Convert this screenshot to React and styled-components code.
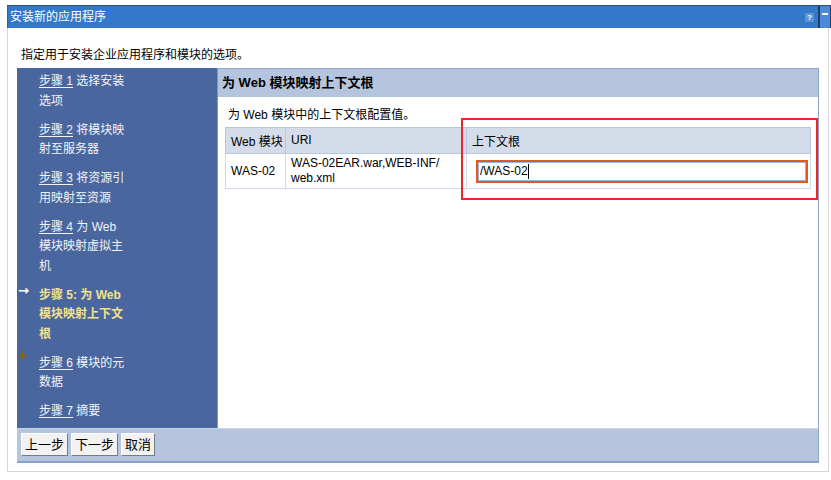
import React from 'react';
import styled, { createGlobalStyle } from 'styled-components';

const GlobalStyle = createGlobalStyle`
  body {
    margin: 0;
    background: #fff;
    font-family: "Liberation Sans", "Noto Sans CJK SC", sans-serif;
    font-size: 12px;
    color: #000;
  }
`;

const Page = styled.div`
  padding: 5px 0 0 7px;
  width: 831px;
  box-sizing: border-box;
`;

const TitleBar = styled.div`
  display: flex;
  align-items: stretch;
  height: 23px;
  background: #3378c9;
  border-top: 1px solid #24508a;
  border-left: 1px solid #2b62a8;
  box-sizing: border-box;
  color: #fff;
`;

const TitleText = styled.div`
  flex: 1;
  padding-left: 2px;
  line-height: 22px;
  font-size: 12px;
`;

const HelpIcon = styled.div`
  align-self: center;
  width: 9px;
  height: 9px;
  margin-right: 4px;
  background: #5d95d8;
  color: #fff;
  font-size: 8px;
  font-weight: bold;
  line-height: 9px;
  text-align: center;
`;

const MinButton = styled.div`
  width: 10px;
  background: #4a8ad6;
  border-left: 2px solid #1d3f6c;
  border-right: 1px solid #1d3f6c;
  display: flex;
  justify-content: center;
  padding-top: 7px;
  box-sizing: content-box;
  &::after {
    content: '';
    width: 6px;
    height: 2px;
    background: #fff;
  }
`;

const Panel = styled.div`
  margin-right: 2px;
  border: 1px solid #d6d6d6;
  border-top: none;
  padding: 19px 9px 8px 9px;
`;

const Intro = styled.div`
  line-height: 16px;
  margin-bottom: 5px;
  padding-left: 4px;
`;

const Wizard = styled.div`
  display: grid;
  grid-template-columns: 201px 1fr;
`;

const Nav = styled.div`
  background: #4a669f;
  border-right: 1px solid #7f96c0;
  padding: 4px 0 6px;
  display: flex;
  flex-direction: column;
  gap: 9.5px;
  height: 360px;
  box-sizing: border-box;
`;

const Step = styled.div`
  display: flex;
  color: ${p => (p.$current ? '#f2e28c' : '#f2f4f8')};
  font-weight: ${p => (p.$current ? 'bold' : 'normal')};
  line-height: 19.5px;
`;

const Marker = styled.div`
  width: 22px;
  flex: none;
  position: relative;
`;

const StepText = styled.div`
  width: 88px;
`;

const StepLink = styled.span`
  text-decoration: underline;
  text-underline-offset: 2px;
`;

const Arrow = styled.span`
  position: absolute;
  left: 1px;
  top: -5px;
  color: #fff;
  font-size: 13px;
  font-family: "DejaVu Sans", sans-serif;
`;

const Star = styled.svg`
  position: absolute;
  left: 0;
  top: -4px;
`;

const Content = styled.div`
  border-top: 1px solid #8ea4c8;
  border-right: 1px solid #8ea4c8;
  position: relative;
`;

const ContentHeader = styled.div`
  background: #b5c5de;
  font-size: 13px;
  font-weight: bold;
  line-height: 28px;
  padding-left: 4px;
`;

const ContentBody = styled.div`
  padding: 9px 7px 0;
`;

const Note = styled.div`
  line-height: 19px;
  padding-left: 3px;
`;

const Table = styled.table`
  width: 100%;
  table-layout: fixed;
  border-collapse: collapse;
  border: 1px solid #b9c7de;
  margin-top: 2px;
`;

const Th = styled.th`
  background: #d4dcea;
  font-weight: normal;
  text-align: left;
  border: 1px solid #b9c7de;
  height: 22px;
  padding: ${p => (p.$low ? '3px 5px 0' : '0 5px 2px')};
  white-space: nowrap;
  vertical-align: middle;
  line-height: 16px;
  font-size: 12px;
`;

const Td = styled.td`
  border: 1px solid #d0d9e8;
  padding: 2px 5px;
  height: 29px;
  line-height: 15px;
  vertical-align: middle;
  font-size: 12px;
`;

const InputCell = styled.td`
  border: 1px solid #d0d9e8;
  padding: 4px 2px 4px 9px;
`;

const FakeInput = styled.div`
  height: 23px;
  box-sizing: border-box;
  border: 2px solid #e2591f;
  box-shadow: inset 0 0 0 1px #9db4dc;
  padding-left: 2px;
  line-height: 19px;
  font-size: 12px;
  display: flex;
  align-items: center;
`;

const Caret = styled.span`
  width: 1px;
  height: 15px;
  background: #000;
`;

const Highlight = styled.div`
  position: absolute;
  left: 243px;
  top: 49px;
  width: 357px;
  height: 82px;
  border: 2px solid #e8272e;
  box-sizing: border-box;
  pointer-events: none;
`;

const ButtonBar = styled.div`
  grid-column: 1 / 3;
  background: #b5c5de;
  border-top: 1px solid #c8d4e6;
  border-bottom: 2px solid #8aa0c8;
  border-right: 1px solid #8ea4c8;
  padding: 4px 4px 5px;
  display: flex;
  gap: 3px;
`;

const Button = styled.button`
  font-family: "Liberation Sans", "Noto Sans CJK SC", sans-serif;
  font-size: 13px;
  height: 23px;
  padding: 0 3px;
  background: #f2f2f2;
  border: 1px solid;
  border-color: #fff #7a7a7a #7a7a7a #fff;
  color: #000;
  line-height: 18px;
`;

const steps = [
  { link: '步骤 1', text: ' 选择安装选项' },
  { link: '步骤 2', text: ' 将模块映射至服务器' },
  { link: '步骤 3', text: ' 将资源引用映射至资源' },
  { link: '步骤 4', text: ' 为 Web 模块映射虚拟主机' },
  { current: true, text: '步骤 5: 为 Web 模块映射上下文根' },
  { link: '步骤 6', text: ' 模块的元数据', star: true },
  { link: '步骤 7', text: ' 摘要' },
];

export default function App() {
  return (
    <Page>
      <GlobalStyle />
      <TitleBar>
        <TitleText>安装新的应用程序</TitleText>
        <HelpIcon>?</HelpIcon>
        <MinButton />
      </TitleBar>
      <Panel>
        <Intro>指定用于安装企业应用程序和模块的选项。</Intro>
        <Wizard>
          <Nav>
            {steps.map((s, i) => (
              <Step key={i} $current={s.current}>
                <Marker>
                  {s.current && <Arrow>→</Arrow>}
                  {s.star && (
                    <Star width="11" height="11" viewBox="0 0 12 12">
                      <path d="M6 0 L7.5 4.5 L12 6 L7.5 7.5 L6 12 L4.5 7.5 L0 6 L4.5 4.5 Z" fill="#7e6a14" />
                    </Star>
                  )}
                </Marker>
                <StepText>
                  {s.link && <StepLink>{s.link}</StepLink>}
                  {s.text}
                </StepText>
              </Step>
            ))}
          </Nav>
          <Content>
            <ContentHeader>为 Web 模块映射上下文根</ContentHeader>
            <ContentBody>
              <Note>为 Web 模块中的上下文根配置值。</Note>
              <Table>
                <colgroup>
                  <col style={{ width: 60 }} />
                  <col style={{ width: 181 }} />
                  <col />
                </colgroup>
                <thead>
                  <tr>
                    <Th $low>Web 模块</Th>
                    <Th>URI</Th>
                    <Th $low>上下文根</Th>
                  </tr>
                </thead>
                <tbody>
                  <tr>
                    <Td>WAS-02</Td>
                    <Td>WAS-02EAR.war,WEB-INF/<br />web.xml</Td>
                    <InputCell>
                      <FakeInput role="textbox">/WAS-02<Caret /></FakeInput>
                    </InputCell>
                  </tr>
                </tbody>
              </Table>
            </ContentBody>
            <Highlight />
          </Content>
          <ButtonBar>
            <Button>上一步</Button>
            <Button>下一步</Button>
            <Button>取消</Button>
          </ButtonBar>
        </Wizard>
      </Panel>
    </Page>
  );
}
